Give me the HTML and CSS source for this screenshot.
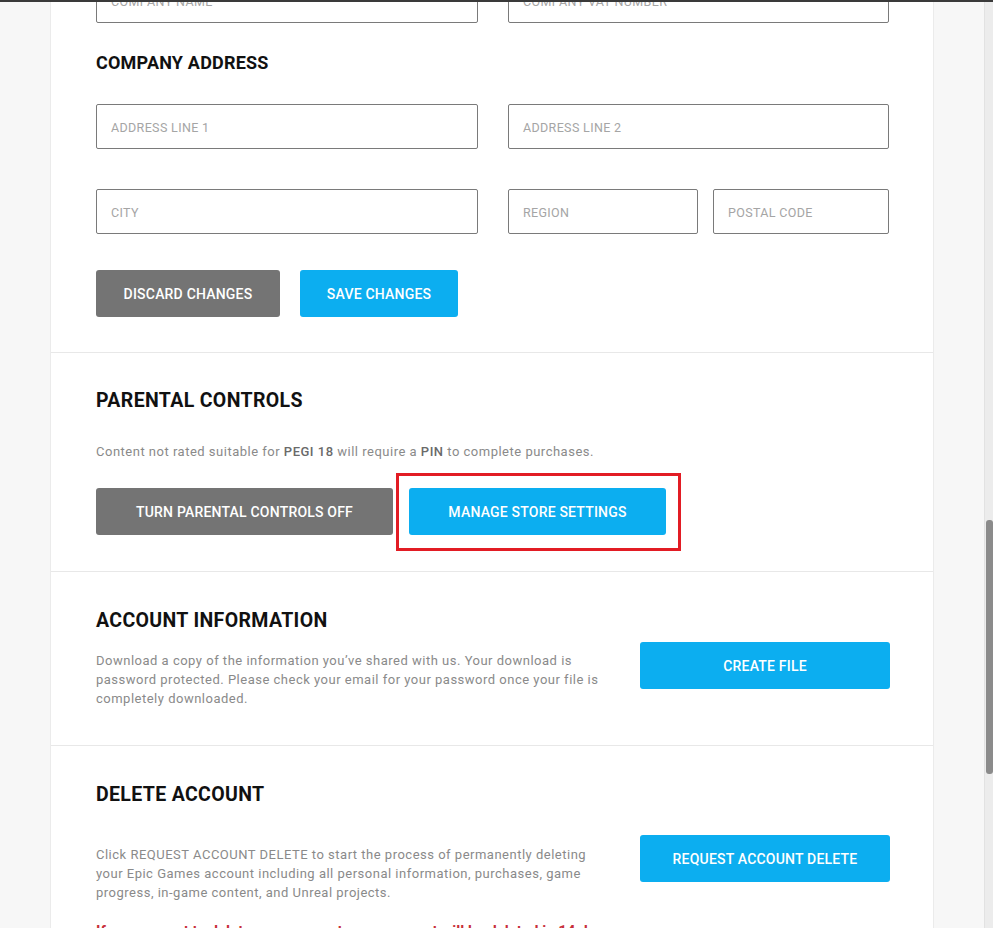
FILE: index.html
```html
<!DOCTYPE html>
<html lang="en">
<head>
<meta charset="utf-8">
<title>Account settings</title>
<link rel="stylesheet" href="styles.css">
</head>
<body>
<div class="topline"></div>
<div class="viewport">
  <div class="page">
    <main class="card">
      <section class="section first">
        <div class="row two">
          <div class="field">COMPANY NAME</div>
          <div class="field">COMPANY VAT NUMBER</div>
        </div>
        <h2 class="heading address-heading">COMPANY ADDRESS</h2>
        <div class="row two">
          <div class="field">ADDRESS LINE 1</div>
          <div class="field">ADDRESS LINE 2</div>
        </div>
        <div class="row two city-row">
          <div class="field">CITY</div>
          <div class="pair">
            <div class="field region">REGION</div>
            <div class="field postal">POSTAL CODE</div>
          </div>
        </div>
        <div class="actions">
          <button class="btn gray discard">DISCARD CHANGES</button>
          <button class="btn blue save">SAVE CHANGES</button>
        </div>
      </section>

      <section class="section pc">
        <h2 class="heading big">PARENTAL CONTROLS</h2>
        <p class="text pc-text">Content not rated suitable for <b>PEGI 18</b> will require a <b>PIN</b> to complete purchases.</p>
        <div class="actions pc-actions">
          <button class="btn gray turn-off">TURN PARENTAL CONTROLS OFF</button>
          <span class="highlight"><button class="btn blue manage">MANAGE STORE SETTINGS</button></span>
        </div>
      </section>

      <section class="section split info">
        <div class="split-left">
          <h2 class="heading big">ACCOUNT INFORMATION</h2>
          <p class="text info-text">Download a copy of the information you’ve shared with us. Your download is password protected. Please check your email for your password once your file is completely downloaded.</p>
        </div>
        <div class="split-right">
          <button class="btn blue wide">CREATE FILE</button>
        </div>
      </section>

      <section class="section split del">
        <div class="split-left">
          <h2 class="heading big">DELETE ACCOUNT</h2>
          <p class="text del-text">Click REQUEST ACCOUNT DELETE to start the process of permanently deleting your Epic Games account including all personal information, purchases, game progress, in-game content, and Unreal projects.</p>
          <p class="warn">If you request to delete your account, your account will be deleted in 14 days.</p>
        </div>
        <div class="split-right">
          <button class="btn blue wide">REQUEST ACCOUNT DELETE</button>
        </div>
      </section>
    </main>
  </div>
  <div class="scrollbar"><div class="thumb"></div></div>
</div>
</body>
</html>
```

FILE: styles.css
```css
* { box-sizing: border-box; }

html, body {
  margin: 0;
  height: 100%;
  overflow: hidden;
  background: #f7f7f7;
  font-family: Roboto, "Liberation Sans", sans-serif;
}

.topline {
  height: 2px;
  background: #3a3a3a;
  position: relative;
  z-index: 2;
}

.viewport {
  display: flex;
  height: 926px;
}

.page {
  flex: 1;
  padding-left: 50px;
  padding-right: 50px;
}

.card {
  width: 884px;
  background: #fff;
  border-left: 1px solid #ebebeb;
  border-right: 1px solid #ebebeb;
  margin-top: -24px;
  min-height: 1100px;
}

.section {
  padding: 36px 45px 36px 45px;
  border-top: 1px solid #e8e8e8;
}

.section.first {
  border-top: none;
  padding-top: 0;
  padding-bottom: 35px;
}

.row {
  display: grid;
  gap: 30px;
}
.row.two { grid-template-columns: 382px 381px; }
.city-row { margin-top: 40px; }

.pair {
  display: flex;
  gap: 15px;
}
.region { width: 190px; }
.postal { flex: 1; }

.field {
  height: 45px;
  border: 1px solid #7a7a7a;
  border-radius: 2px;
  display: flex;
  align-items: center;
  padding-left: 14px;
  font-size: 12.5px;
  color: #a5a5a5;
  letter-spacing: 0.35px;
  font-weight: 400;
  padding-top: 1px;
}

.heading {
  margin: 0;
  font-size: 18px;
  line-height: 22px;
  font-weight: 700;
  color: #111;
  letter-spacing: 0.2px;
}
.heading.big {
  font-size: 19.5px;
  line-height: 24px;
  letter-spacing: 0.35px;
}

.address-heading {
  margin-top: 29px;
  margin-bottom: 30px;
}

.actions {
  display: flex;
  gap: 20px;
  margin-top: 36px;
}

.btn {
  height: 47px;
  border: none;
  border-radius: 3px;
  color: #fff;
  font-family: Roboto, "Liberation Sans", sans-serif;
  font-size: 14px;
  font-weight: 500;
  letter-spacing: 0.2px;
  cursor: pointer;
  padding: 0;
}
.btn.gray { background: #747474; }
.btn.blue { background: #0caef0; }

.discard { width: 184px; }
.save { width: 158px; }

.text {
  margin: 0;
  font-size: 13px;
  line-height: 19px;
  color: #8a8a8a;
  letter-spacing: 0.5px;
}
.text b {
  color: #6a6a6a;
  font-weight: 500;
}

.pc-text { margin-top: 29px; }
.pc-actions { margin-top: 27px; gap: 16px; }
.turn-off { width: 297px; }
.manage { width: 257px; display: block; }

.highlight {
  position: relative;
  display: block;
}
.highlight::after {
  content: "";
  position: absolute;
  left: -13px;
  right: -15px;
  top: -15px;
  bottom: -16px;
  border: 3px solid #e21c24;
  pointer-events: none;
}

.split {
  display: flex;
  justify-content: space-between;
}
.split-left { width: 505px; }
.wide { width: 250px; }

.info { padding-top: 37px; padding-bottom: 37px; }
.info .split-right { padding-top: 33px; margin-right: -2px; }
.info-text { margin-top: 18px; }

.del { padding-top: 37px; }
.del .split-right { padding-top: 52px; margin-right: -2px; }
.del-text { margin-top: 38px; }

.warn {
  margin: 20px 0 0;
  color: #c8303a;
  font-size: 15px;
  font-weight: 700;
  line-height: 19px;
  white-space: nowrap;
}

.scrollbar {
  width: 9px;
  background: #ececec;
  border-left: 1px solid #e2e2e2;
  position: relative;
}
.thumb {
  position: absolute;
  left: 1px;
  right: 0;
  top: 518px;
  height: 254px;
  background: #8b8b8b;
  border-radius: 3px;
}
```
